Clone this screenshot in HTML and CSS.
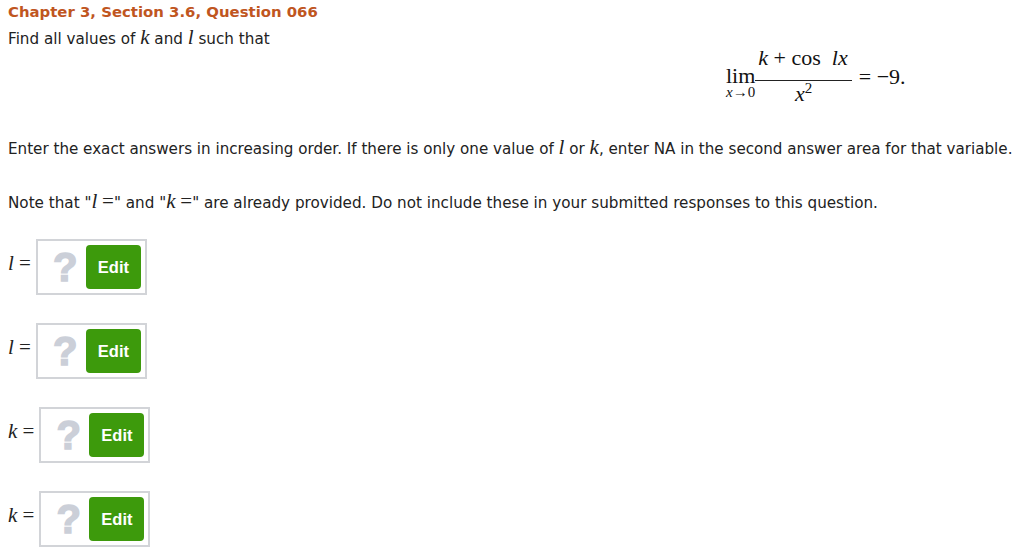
FILE: index.html
```html
<!DOCTYPE html>
<html>
<head>
<meta charset="utf-8">
<link rel="stylesheet" href="styles.css">
</head>
<body>
<div class="page">
  <div class="title">Chapter 3, Section 3.6, Question 066</div>
  <div class="line find">Find all values of <span class="mi">k</span> and <span class="mi">l</span> such that</div>
  <div class="display">
    <div class="lim">
      <span class="limword">lim</span>
      <span class="limsub"><span class="mi">x</span>→0</span>
    </div>
    <div class="frac">
      <span class="num"><span class="mi">k</span> + cos&nbsp; <span class="mi">lx</span></span>
      <span class="den"><span class="mi">x</span><sup>2</sup></span>
    </div>
    <div class="rhs">=&nbsp;−9.</div>
  </div>
  <div class="line enter">Enter the exact answers in increasing order. If there is only one value of <span class="mi">l</span> or <span class="mi">k</span>, enter NA in the second answer area for that variable.</div>
  <div class="line note">Note that "<span class="mi">l</span> <span class="eq">=</span>" and "<span class="mi">k</span> <span class="eq">=</span>" are already provided. Do not include these in your submitted responses to this question.</div>
  <div class="answers">
    <div class="ans"><span class="lbl"><span class="mi">l</span> =</span><div class="box"><span class="q">?</span><span class="edit">Edit</span></div></div>
    <div class="ans"><span class="lbl"><span class="mi">l</span> =</span><div class="box"><span class="q">?</span><span class="edit">Edit</span></div></div>
    <div class="ans"><span class="lbl"><span class="mi">k</span> =</span><div class="box"><span class="q">?</span><span class="edit">Edit</span></div></div>
    <div class="ans"><span class="lbl"><span class="mi">k</span> =</span><div class="box"><span class="q">?</span><span class="edit">Edit</span></div></div>
  </div>
</div>
</body>
</html>
```
FILE: styles.css
```css
html, body { margin: 0; padding: 0; background: #fff; }
.page {
  padding: 2px 0 0 8px;
  font-family: "DejaVu Sans", Verdana, sans-serif;
  font-size: 15.2px;
  color: #222;
}
.title {
  font-weight: bold;
  font-size: 14.9px;
  color: #c0561f;
  line-height: 20px;
}
.line { line-height: 20px; white-space: nowrap; }
.find { margin-top: 5px; }
.mi {
  font-family: "Liberation Serif", "Times New Roman", serif;
  font-style: italic;
  font-size: 21px;
}
.eq { font-family: "Liberation Serif", serif; font-size: 21px; }
.display {
  display: flex;
  align-items: flex-start;
  margin-left: 718px;
  margin-top: 0;
  font-family: "Liberation Serif", "Times New Roman", serif;
  font-size: 22px;
  color: #111;
}
.display .mi { font-size: 22px; }
.lim {
  display: flex;
  flex-direction: column;
  align-items: center;
  margin-top: 18px;
}
.limword { line-height: 18px; }
.limsub { font-size: 15px; line-height: 14px; }
.limsub .mi { font-size: 15px; }
.frac {
  display: flex;
  flex-direction: column;
  align-items: center;
  margin-top: -2px;
}
.num {
  padding: 0 4px 11px 3px;
  border-bottom: 1px solid #222;
  line-height: 22px;
}
.num .mi, .den .mi { line-height: 22px; }
.den { line-height: 26px; height: 26px; }
.den sup { font-size: 15px; vertical-align: 8px; line-height: 0; }
.rhs { margin-left: 7px; margin-top: 19px; line-height: 18px; }
.enter { margin-top: 30px; font-size: 15.15px; }
.note { margin-top: 32px; }
.answers {
  margin-top: 26px;
  display: flex;
  flex-direction: column;
  gap: 28px;
}
.ans { display: flex; align-items: center; }
.lbl {
  font-family: "Liberation Serif", serif;
  font-size: 21px;
  margin-right: 5px;
  margin-top: -8px;
}
.box {
  display: flex;
  align-items: center;
  border: 2px solid #d2d4d8;
  height: 52px;
  padding: 0 4px 0 15px;
  box-sizing: content-box;
}
.q {
  font-family: "Liberation Sans", Arial, sans-serif;
  font-weight: 700;
  font-size: 40px;
  color: #cbcfd8;
  -webkit-text-stroke: 1.6px #cbcfd8;
  width: 33px;
  line-height: 40px;
}
.edit {
  display: flex;
  align-items: center;
  justify-content: center;
  width: 55px;
  height: 44px;
  background: #3d9a0c;
  color: #fff;
  border-radius: 4px;
  font-family: "Liberation Sans", Arial, sans-serif;
  font-weight: bold;
  font-size: 16.5px;
}
```
